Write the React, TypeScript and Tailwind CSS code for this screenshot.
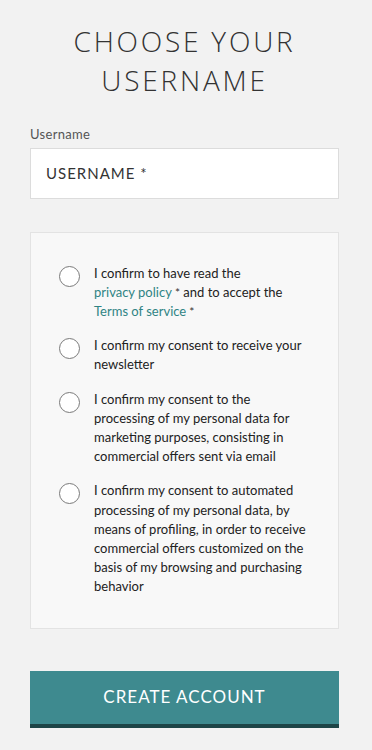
import React from 'react';

const consents: React.ReactNode[] = [
  <>
    I confirm to have read the{' '}
    <span className="whitespace-nowrap">
      <a className="text-[#2f8484]">privacy policy</a>
      <span className="text-[12px] text-[#333]">{'\u00a0'}*</span>
    </span>{' '}
    and to accept the{' '}
    <span className="whitespace-nowrap">
      <a className="text-[#2f8484]">Terms of service</a>
      <span className="text-[12px] text-[#333]">{'\u00a0'}*</span>
    </span>
  </>,
  <>I confirm my consent to receive your newsletter</>,
  <>I confirm my consent to the processing of my personal data for marketing purposes, consisting in commercial offers sent via email</>,
  <>
    I confirm my consent to automated processing of my personal data, by means of profiling, in order to receive commercial offers
    customized on the basis of my browsing and purchasing behavior
  </>,
];

export default function App() {
  return (
    <div className="min-h-[750px] bg-[#f2f2f2] pl-[30px] pr-[33px] pt-[22px] pb-10 font-['Lato',sans-serif] text-[#222]">
      {/* Title */}
      <h1 className="text-center font-['Open_Sans',sans-serif] font-light text-[28px] leading-[39px] tracking-[2.8px] text-[#333]">
        CHOOSE YOUR
        <br />
        USERNAME
      </h1>

      {/* Username field */}
      <label className="block mt-[25px] text-[13px] text-[#555] tracking-[0.3px]">Username</label>
      <div className="mt-[3px] h-[51px] bg-white border border-[#dcdcdc] flex items-center px-[15px]">
        <span className="text-[15px] tracking-[1px] text-[#333]">USERNAME *</span>
      </div>

      {/* Consents */}
      <div className="mt-[33px] bg-[#f8f8f8] border border-[#e3e3e3] pl-[28px] pr-[16px] pt-[31px] pb-[31px] flex flex-col gap-[15px]">
        {consents.map((c, i) => (
          <div key={i} className="flex items-start gap-[14px]">
            <span className="mt-[2px] shrink-0 w-[21px] h-[21px] rounded-full border-[1.5px] border-[#7a7a7a] bg-white" />
            <p className="w-[214px] text-[13px] leading-[19.2px] text-[#222]">{c}</p>
          </div>
        ))}
      </div>

      {/* Button */}
      <button className="mt-[42px] w-full h-[57px] bg-[#3e8a8f] border-b-[4px] border-[#1d4547] text-white text-[17px] tracking-[1px] font-['Lato',sans-serif]">
        CREATE ACCOUNT
      </button>
    </div>
  );
}
